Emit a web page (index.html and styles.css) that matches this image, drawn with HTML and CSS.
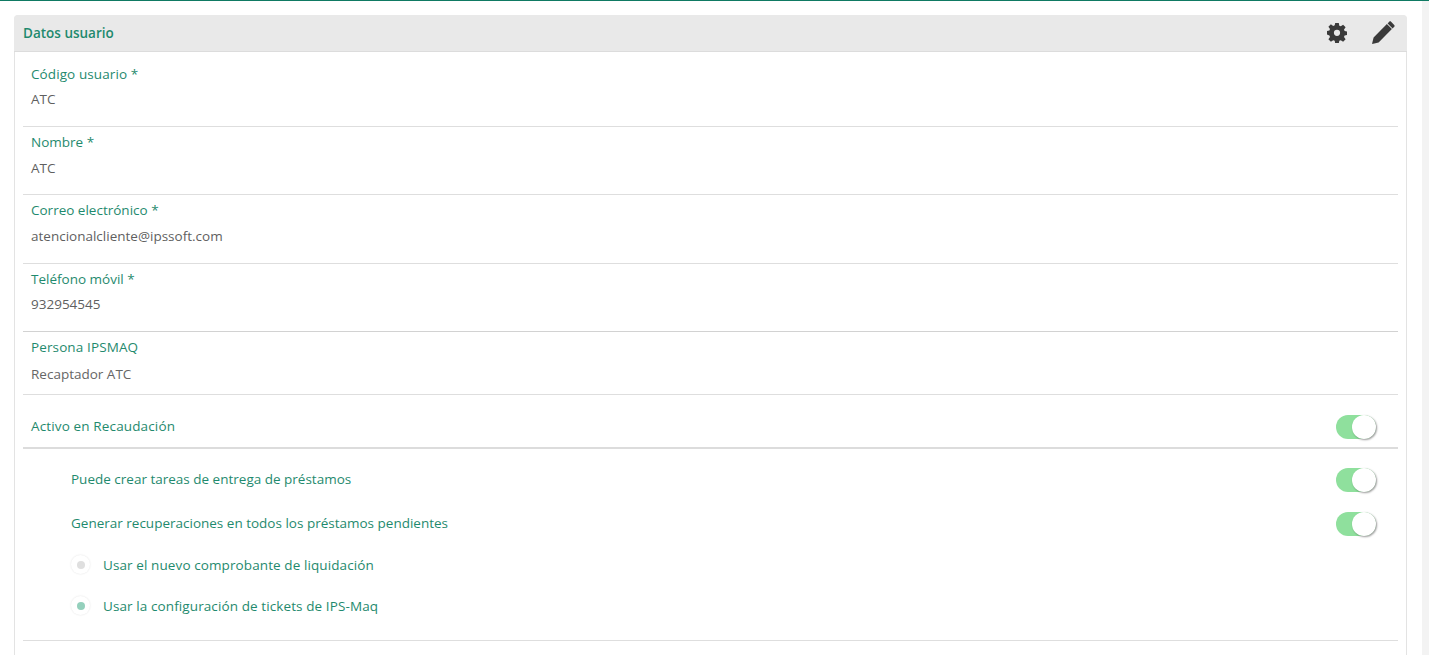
FILE: index.html
```html
<!DOCTYPE html>
<html lang="es">
<head>
<meta charset="utf-8">
<title>Datos usuario</title>
<link rel="stylesheet" href="styles.css">
</head>
<body>
<div class="page">
  <main class="content">
    <section class="card">
      <header class="card-head">
        <h2 class="card-title">Datos usuario</h2>
        <div class="card-actions">
          <svg class="icon" viewBox="0 0 20 20" width="20" height="20"><path fill="#3a3a3a" fill-rule="evenodd" d="M8.2 0h3.6l.5 2.7 1.5.6 2.3-1.6 2.5 2.5-1.6 2.3.6 1.5 2.4.4v3.6l-2.4.5-.6 1.5 1.6 2.3-2.5 2.5-2.3-1.6-1.5.6-.5 2.6H8.2l-.5-2.6-1.5-.6-2.3 1.6-2.5-2.5 1.6-2.3-.6-1.5L0 11.6V8l2.4-.4.6-1.5-1.6-2.3 2.5-2.5 2.3 1.6 1.5-.6zM10 6.7a3.1 3.1 0 1 0 0 6.2 3.1 3.1 0 0 0 0-6.2z"/></svg>
          <svg class="icon" viewBox="0 0 24 24" width="24" height="24"><path fill="#3a3a3a" d="M1 23l1.6-6.6L15.9 3.1l5 5L7.6 21.4zM16.6 2.4l1.6-1.6c.6-.6 1.3-.6 1.9 0l3.1 3.1c.6.6.6 1.3 0 1.9l-1.6 1.6z"/></svg>
        </div>
      </header>
      <div class="card-body">
        <div class="field tight wide"><label class="field-label">Código usuario *</label><div class="field-value">ATC</div></div>
        <div class="field"><label class="field-label">Nombre *</label><div class="field-value">ATC</div></div>
        <div class="field"><label class="field-label">Correo electrónico *</label><div class="field-value">atencionalcliente@ipssoft.com</div></div>
        <div class="field strong tight"><label class="field-label">Teléfono móvil *</label><div class="field-value">932954545</div></div>
        <div class="field short"><label class="field-label">Persona IPSMAQ</label><div class="field-value">Recaptador ATC</div></div>
        <div class="toggle-main">
          <span class="option-text">Activo en Recaudación</span>
          <span class="switch"><span class="knob"></span></span>
        </div>
        <div class="options">
          <div class="toggle-row"><span class="option-text">Puede crear tareas de entrega de préstamos</span><span class="switch"><span class="knob"></span></span></div>
          <div class="toggle-row"><span class="option-text">Generar recuperaciones en todos los préstamos pendientes</span><span class="switch"><span class="knob"></span></span></div>
          <div class="radio-row"><span class="radio"><span class="dot"></span></span><span class="option-text">Usar el nuevo comprobante de liquidación</span></div>
          <div class="radio-row"><span class="radio"><span class="dot on"></span></span><span class="option-text">Usar la configuración de tickets de IPS-Maq</span></div>
        </div>
      </div>
    </section>
  </main>
  <div class="scrollbar"></div>
</div>
</body>
</html>
```
FILE: styles.css
```css
* { box-sizing: border-box; }
html, body { margin: 0; height: 100%; overflow: hidden; background: #fff; }
body { font-family: "Open Sans", "Noto Sans", sans-serif; font-size: 13.5px; }
.page { display: flex; height: 655px; border-top: 1px solid #0f7a63; }
.content { flex: 1; min-width: 0; padding: 14px 15px 0 14px; }
.scrollbar { width: 7px; background: #f3f3f3; }
.card { height: 660px; border: 1px solid #e3e3e3; border-radius: 4px 4px 0 0; }
.card-head { height: 37px; margin: -1px -1px 0; padding: 0 12px 0 9px; background: #e9e9e9; border-radius: 4px 4px 0 0; border-bottom: 1px solid #dcdcdc; display: flex; align-items: center; justify-content: space-between; }
.card-title { margin: 0; font-size: 13.5px; font-weight: 600; color: #1f8a6e; }
.card-actions { display: flex; align-items: center; gap: 24px; }
.icon { display: block; }
.card-body { padding: 0 8px; }
.field { height: 68.3px; padding: 6px 8px 0; border-bottom: 1px solid #dedede; }
.field.strong { border-bottom-color: #d2d2d2; }
.field:first-child { height: 75px; padding-top: 13px; }
.field-label { display: block; color: #1f8a6e; line-height: 18px; }
.field.wide .field-label { letter-spacing: .1px; }
.field-value { margin-top: 8px; color: #5f5f5f; line-height: 18px; }
.field.tight .field-value { margin-top: 7px; }
.field.short { height: 63px; }
.field.short .field-label { letter-spacing: .12px; }
.field.short .field-value { margin-top: 9px; color: #666; }
.toggle-main { height: 54px; padding: 13px 22px 0 8px; display: flex; align-items: center; justify-content: space-between; border-bottom: 2px solid #dcdcdc; }
.toggle-main .option-text { letter-spacing: .14px; margin-bottom: 2px; }
.option-text { color: #1f8a6e; }
.switch { position: relative; display: block; width: 40px; height: 24px; border-radius: 12px; background: #8fe09d; }
.knob { position: absolute; top: 0; right: 0; width: 24px; height: 24px; border-radius: 50%; background: #fff; box-shadow: 1px 1px 2px rgba(0,0,0,.4); }
.options { height: 192px; padding: 9px 22px 0 48px; border-bottom: 1px solid #dedede; }
.toggle-row { height: 44px; display: flex; align-items: center; justify-content: space-between; }
.toggle-row .option-text { margin-bottom: 2px; }
.radio-row { height: 40px; display: flex; align-items: center; gap: 13px; }
.radio-row .option-text { letter-spacing: .1px; }
.radio-row:nth-child(3) { height: 41px; margin-top: -1px; padding-bottom: 1px; }
.radio { width: 19px; height: 19px; border-radius: 50%; background: #fff; box-shadow: 0 0 2px rgba(0,0,0,.12); display: flex; align-items: center; justify-content: center; }
.dot { width: 8px; height: 8px; border-radius: 50%; background: #dfdfdf; }
.dot.on { background: #94d0bc; }
```
